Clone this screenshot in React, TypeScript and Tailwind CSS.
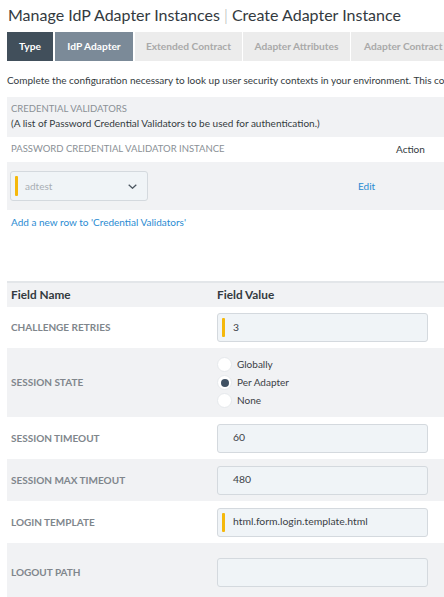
import React from "react";

const font = { fontFamily: "Lato, 'Open Sans', 'Liberation Sans', sans-serif" };

function Bar() {
  return <span className="absolute left-[4px] top-[4px] bottom-[4px] w-[3px] rounded-[1px] bg-[#f5b80b]" />;
}

function Input({ value, bar }: { value?: string; bar?: boolean }) {
  return (
    <div className="relative h-[29px] w-[211px] rounded-[3px] border border-[#d4d9de] bg-[#f0f4f7] flex items-center pl-[15px] text-[10.4px] text-[#3b4146]">
      {bar && <Bar />}
      {value}
    </div>
  );
}

function Radio({ label, checked }: { label: string; checked?: boolean }) {
  return (
    <div className="flex items-center h-[18px]">
      <span className="w-[15px] h-[15px] rounded-full bg-white border border-[#e6e9ec] flex items-center justify-center">
        {checked && <span className="w-[8px] h-[8px] rounded-full bg-[#3f5163]" />}
      </span>
      <span className="ml-[5px] text-[10px] text-[#3b4146]">{label}</span>
    </div>
  );
}

function Row({ label, gray, h, children }: { label: string; gray?: boolean; h: string; children: React.ReactNode }) {
  return (
    <div className={`flex items-center ${h} ${gray ? "bg-[#f1f2f4]" : "bg-white"}`}>
      <div className="w-[206px] pl-[4px] text-[10px] font-bold text-[#80868c] uppercase">{label}</div>
      <div className="pl-[4px]">{children}</div>
    </div>
  );
}

export default function App() {
  return (
    <div className="w-[444px] h-[597px] overflow-hidden bg-white" style={font}>
      <div className="w-[640px] pl-[7px]">
        <div className="pt-[4px] pl-[1px] text-[16px] leading-[21px] text-[#333a40] whitespace-nowrap">
          Manage IdP Adapter Instances <span className="text-[#a3a9ae] font-light">|</span> Create Adapter Instance
        </div>
        <div className="mt-[7px] flex h-[29px] text-[10.2px] font-bold whitespace-nowrap">
          <div className="w-[46px] bg-[#414f5b] text-white flex items-center justify-center">Type</div>
          <div className="ml-[2px] w-[78px] bg-[#7b8a98] text-white flex items-center justify-center">IdP Adapter</div>
          <div className="ml-[2px] w-[107px] bg-[#ececec] text-[#a9a9a9] flex items-center justify-center">Extended Contract</div>
          <div className="ml-[1px] w-[107px] bg-[#ececec] text-[#a9a9a9] flex items-center justify-center">Adapter Attributes</div>
          <div className="ml-[1px] w-[140px] bg-[#ececec] text-[#a9a9a9] flex items-center pl-[13px]">Adapter Contract Mapping</div>
        </div>
        <div className="mt-[12px] text-[10px] leading-[14px] text-[#333a40] whitespace-nowrap">
          Complete the configuration necessary to look up user security contexts in your environment. This configuration
        </div>
        <div className="mt-[10px] bg-[#f1f2f4] pt-[4px] pb-[6px] pl-[4px] leading-[15px]">
          <div className="text-[9.5px] text-[#8a9096] uppercase">Credential Validators</div>
          <div className="text-[10px] text-[#333a40]">(A list of Password Credential Validators to be used for authentication.)</div>
        </div>
        <div className="flex items-center h-[25px] pl-[4px]">
          <div className="w-[385px] text-[9.5px] text-[#8a9096] uppercase">Password Credential Validator Instance</div>
          <div className="text-[10px] text-[#333a40]">Action</div>
        </div>
        <div className="flex items-center h-[48px] bg-[#f1f2f4] pl-[3px]">
          <div className="relative h-[30px] w-[138px] rounded-[3px] border border-[#d4d9de] bg-[#f0f4f7] flex items-center pl-[14px] pr-[10px] text-[10px] text-[#a8aeb4]">
            <Bar />
            <span className="flex-1">adtest</span>
            <svg width="9" height="5" viewBox="0 0 9 5">
              <path d="M0.7 0.7l3.8 3.6 3.8-3.6" fill="none" stroke="#4a555f" strokeWidth="1.2" />
            </svg>
          </div>
          <div className="ml-[210px] text-[10px] text-[#2a8bd2]">Edit</div>
        </div>
        <div className="mt-[5px] pl-[4px] text-[10px] leading-[14px] text-[#2a8bd2]">
          Add a new row to 'Credential Validators'
        </div>
        <div className="mt-[52px] border-t-[2px] border-[#e3e6e9] bg-[#f1f2f4] h-[26px] flex items-center text-[11.8px] font-bold text-[#333a40]">
          <div className="w-[206px] pl-[4px]">Field Name</div>
          <div className="pl-[4px]">Field Value</div>
        </div>
        <Row label="Challenge Retries" h="h-[41px]">
          <Input value="3" bar />
        </Row>
        <Row label="Session State" gray h="h-[69px]">
          <div className="flex flex-col">
            <Radio label="Globally" />
            <Radio label="Per Adapter" checked />
            <Radio label="None" />
          </div>
        </Row>
        <Row label="Session Timeout" h="h-[42px]">
          <Input value="60" />
        </Row>
        <Row label="Session Max Timeout" gray h="h-[42px]">
          <Input value="480" />
        </Row>
        <Row label="Login Template" h="h-[42px]">
          <Input value="html.form.login.template.html" bar />
        </Row>
        <Row label="Logout Path" gray h="h-[58px]">
          <Input />
        </Row>
      </div>
    </div>
  );
}
